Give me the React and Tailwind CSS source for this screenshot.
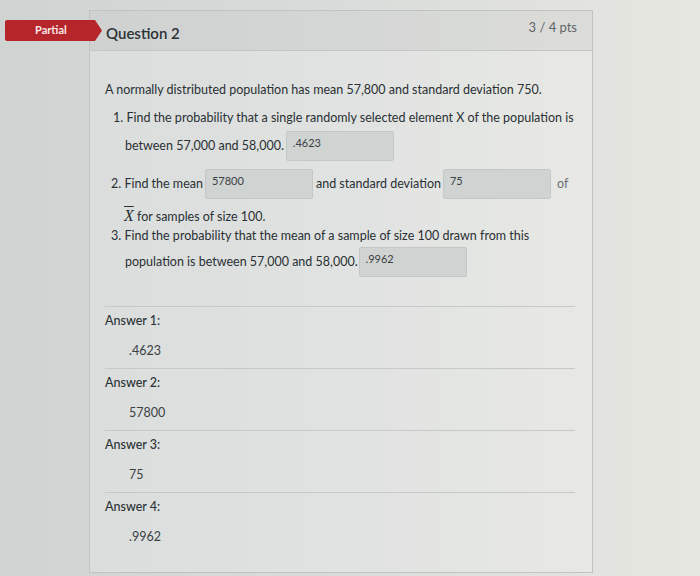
import React from "react"

const answers = [
  { label: "Answer 1:", value: ".4623" },
  { label: "Answer 2:", value: "57800" },
  { label: "Answer 3:", value: "75" },
  { label: "Answer 4:", value: ".9962" },
]

const Box = ({ value, w = "w-[108px]" }) => (
  <div className={`${w} h-[30px] shrink-0 bg-[#cfd3d1] border border-[#c3c7c5] rounded-[2px] pl-[6px] pt-[4px] text-[11px] leading-[14px] text-[#3b4045]`}>
    {value}
  </div>
)

export default function App() {
  return (
    <div className="relative w-[700px] h-[576px] overflow-hidden bg-gradient-to-r from-[#cfd3d2] via-[#d9dcda] to-[#e7e7e1] font-['Lato','Open_Sans',sans-serif] text-[#2a3034]">
      {/* status badge */}
      <div className="absolute left-[5px] top-[20px] w-[97px] h-[21px] bg-[#b5252a] rounded-l-[2px] [clip-path:polygon(0_0,90px_0,97px_50%,90px_100%,0_100%)] flex items-center pl-[30px] text-[11px] font-bold text-white/90">
        Partial
      </div>

      <div className="ml-[89px] mt-[10px] w-[504px] h-[563px] border border-[#bfc3c1] bg-white/20 flex flex-col">
        <div className="h-[40px] shrink-0 bg-black/[0.05] border-b border-[#c3c6c4] flex justify-between pl-[16px] pr-[15px]">
          <div className="pt-[12px] text-[15px] leading-[20px] font-semibold text-[#2c3236]">Question 2</div>
          <div className="pt-[6px] text-[13px] leading-[20px] text-[#5f6468]">3 / 4 pts</div>
        </div>

        <div className="pl-[15px] pr-[17px] flex flex-col text-[12.5px]">
          <div className="mt-[29px] h-[20px] leading-[20px]">
            A normally distributed population has mean 57,800 and standard deviation 750.
          </div>
          <div className="mt-[8px] h-[20px] leading-[20px] ml-[8px]">
            1. Find the probability that a single randomly selected element X of the population is
          </div>
          <div className="mt-[3px] h-[30px] ml-[20px] flex items-center gap-[2px]">
            <span>between 57,000 and 58,000.</span>
            <Box value=".4623" />
          </div>
          <div className="mt-[8px] h-[30px] ml-[6px] flex items-center gap-[2px]">
            <span>2. Find the mean</span>
            <Box value="57800" />
            <span className="ml-[1px]">and standard deviation</span>
            <Box value="75" />
            <span className="ml-[4px] text-[#6a6f72]">of</span>
          </div>
          <div className="mt-[7px] h-[20px] leading-[20px] ml-[19px]">
            <span className="font-['Liberation_Serif',serif] italic text-[16px] overline">X</span> for samples of size 100.
          </div>
          <div className="h-[20px] leading-[20px] ml-[6px]">
            3. Find the probability that the mean of a sample of size 100 drawn from this
          </div>
          <div className="mt-[1px] h-[30px] ml-[20px] flex items-center gap-[1px]">
            <span>population is between 57,000 and 58,000.</span>
            <Box value=".9962" />
          </div>

          <div className="mt-[29px] flex flex-col">
            {answers.map((a, i) => (
              <div key={i} className="border-t border-[#c6c9c7] pt-[4px] pb-[7px]">
                <div className="h-[20px] leading-[20px] text-[12.5px] font-medium text-[#2c3236]">{a.label}</div>
                <div className="mt-[10px] h-[20px] leading-[20px] pl-[24px] text-[12.5px] text-[#3b4045]">{a.value}</div>
              </div>
            ))}
          </div>
        </div>
      </div>
    </div>
  )
}
